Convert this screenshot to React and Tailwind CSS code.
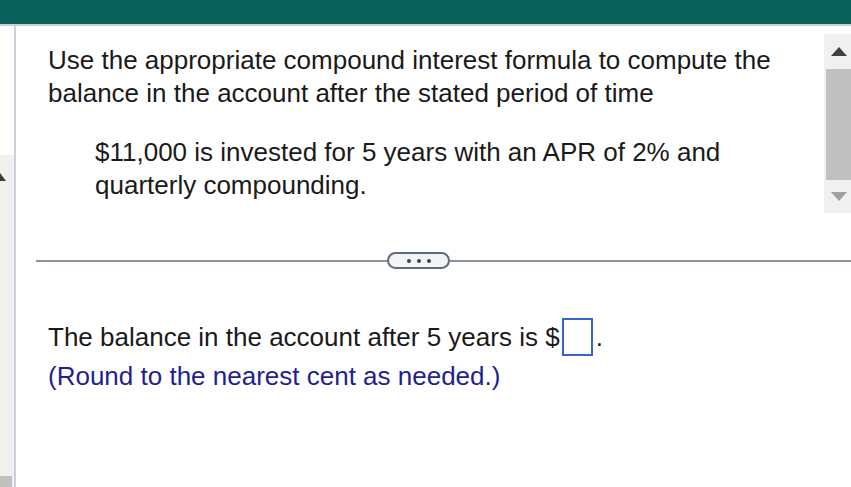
import React from "react";

function ScrollArrow({ up, color }) {
  return (
    <svg width="16" height="9" viewBox="0 0 16 9" className="block">
      {up ? <polygon points="8,0 16,9 0,9" fill={color} /> : <polygon points="0,0 16,0 8,9" fill={color} />}
    </svg>
  );
}

export default function App() {
  return (
    <div className="h-[487px] w-[851px] overflow-hidden bg-white" style={{ fontFamily: '"Liberation Sans", Arial, sans-serif' }}>
      <div className="h-[24px] bg-[#07615a]" />
      <div className="h-[2px] bg-[#c9d1dd]" />
      <div className="flex h-[461px]">
        {/* left pane edge */}
        <div className="flex w-[16px] shrink-0 flex-col border-r-2 border-[#c9d1dd]">
          <div className="h-[129px] bg-white" />
          <div className="relative flex-1 bg-[#f0f0f0]">
            <svg width="6" height="8" viewBox="0 0 6 8" className="absolute left-0 top-[18px]">
              <polygon points="0,0 6,8 0,8" fill="#3c3c3c" />
            </svg>
            <div className="absolute bottom-0 left-0 h-[11px] w-[12px] bg-[#c0c0c0]" />
          </div>
        </div>

        <div className="relative flex-1">
          {/* right scrollbar */}
          <div className="absolute right-0 top-[8px] flex h-[179px] w-[27px] flex-col items-center bg-[#f0f0f0]">
            <div className="pl-[2px] pt-[13px]">
              <ScrollArrow up color="#404040" />
            </div>
            <div className="ml-[2px] mt-[13px] h-[111px] w-[25px] self-end bg-[#c0c0c0]" />
            <div className="pl-[2px] pt-[12px]">
              <ScrollArrow color="#a0a0a0" />
            </div>
          </div>

          <div className="pl-[32px] pr-[30px] pt-[18px] text-[26px] leading-[33px] text-[#1a1a1a]">
            <p>
              Use the appropriate compound interest formula to compute the
              <br />
              balance in the account after the stated period of time
            </p>
            <p className="mt-[26px] pl-[47px]">
              $11,000 is invested for 5 years with an APR of 2% and
              <br />
              quarterly compounding.
            </p>
          </div>

          <div className="mt-[50px] flex items-center pl-[20px]">
            <div className="h-[2px] w-[351px] bg-[#8a93a0]" />
            <div className="flex h-[17px] w-[63px] items-center justify-center gap-[6px] rounded-full border-2 border-[#5f6b7a] bg-[#f3f4f6]">
              <span className="h-[4px] w-[4px] rounded-full bg-[#3c4450]" />
              <span className="h-[4px] w-[4px] rounded-full bg-[#3c4450]" />
              <span className="h-[4px] w-[4px] rounded-full bg-[#3c4450]" />
            </div>
            <div className="h-[2px] flex-1 bg-[#8a93a0]" />
          </div>

          <div className="mt-[49px] pl-[32px] text-[26px] leading-[38px]">
            <p className="flex items-center text-[#1a1a1a]">
              The balance in the account after 5 years is $
              <span className="ml-[2px] inline-block h-[38px] w-[31px] border-2 border-[#3366cc]" />
              <span className="ml-[3px]">.</span>
            </p>
            <p className="mt-[1px] text-[#1f1f8f]">(Round to the nearest cent as needed.)</p>
          </div>
        </div>
      </div>
    </div>
  );
}
